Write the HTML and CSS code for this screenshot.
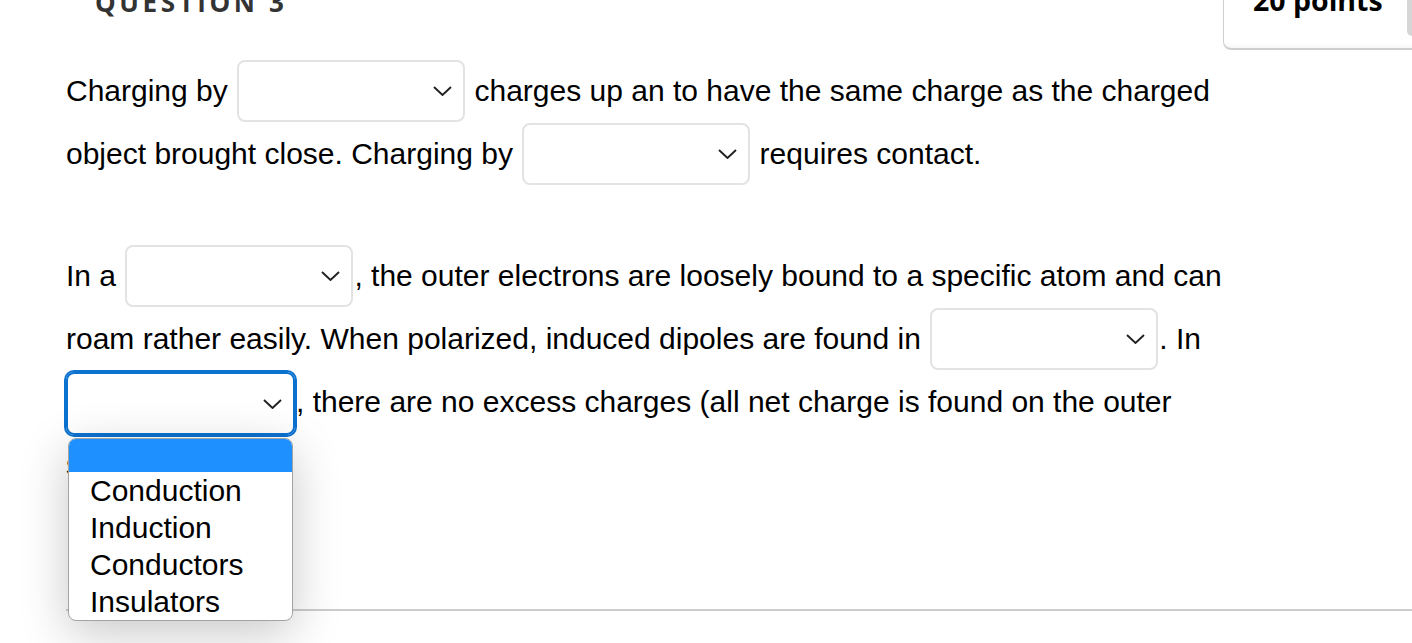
FILE: index.html
```html
<!DOCTYPE html>
<html lang="en">
<head>
<meta charset="utf-8">
<title>Question 3</title>
<link rel="stylesheet" href="styles.css">
</head>
<body>
<div class="page">
  <header class="qhead">
    <h2 class="qtitle">QUESTION 3</h2>
    <div class="points">
      <span class="ptext">20 points</span>
      <span class="pbar"></span>
    </div>
  </header>
  <div class="qbody">
    <p class="para">Charging by <span class="sel"><svg class="chev" viewBox="0 0 19 10" width="19" height="10"><polyline points="1,1 9.5,9 18,1"/></svg></span> charges up an to have the same charge as the charged object brought close. Charging by <span class="sel"><svg class="chev" viewBox="0 0 19 10" width="19" height="10"><polyline points="1,1 9.5,9 18,1"/></svg></span> requires contact.</p>
    <p class="para para2">In a <span class="sel"><svg class="chev" viewBox="0 0 19 10" width="19" height="10"><polyline points="1,1 9.5,9 18,1"/></svg></span>, the outer electrons are loosely bound to a specific atom and can roam rather easily. When polarized, induced dipoles are found in <span class="sel"><svg class="chev" viewBox="0 0 19 10" width="19" height="10"><polyline points="1,1 9.5,9 18,1"/></svg></span>. In <span class="sel sel-first focused"><svg class="chev" viewBox="0 0 19 10" width="19" height="10"><polyline points="1,1 9.5,9 18,1"/></svg><span class="menu"><span class="opt opt-blank"></span><span class="opt">Conduction</span><span class="opt">Induction</span><span class="opt">Conductors</span><span class="opt">Insulators</span></span></span>, there are no excess charges (all net charge is found on the outer surface).</p>
  </div>
  <div class="sep"></div>
</div>
</body>
</html>
```
FILE: styles.css
```css
html, body {
  margin: 0;
  padding: 0;
  overflow: hidden;
  background: #fff;
}

.page {
  width: 1412px;
  height: 643px;
  overflow: hidden;
  font-family: "Liberation Sans", Arial, sans-serif;
  color: #000;
}

.qhead {
  display: flex;
  align-items: flex-start;
  height: 50px;
}

.qtitle {
  margin: -11px 0 0 95px;
  font-family: "Open Sans", sans-serif;
  font-weight: 700;
  font-size: 26px;
  line-height: 26px;
  letter-spacing: 3.6px;
  color: #333;
}

.points {
  margin-left: auto;
  width: 189px;
  height: 50px;
  box-sizing: border-box;
  border-left: 1px solid #cfcfcf;
  border-bottom: 2px solid #cfcfcf;
  border-bottom-left-radius: 8px;
  display: flex;
  align-items: flex-start;
  box-shadow: inset 0 -6px 6px -6px rgba(0, 0, 0, 0.08);
}

.ptext {
  margin: -15px 0 0 29px;
  font-family: "Open Sans", sans-serif;
  font-weight: 700;
  font-size: 28.5px;
  line-height: 30px;
  color: #000;
  white-space: nowrap;
}

.pbar {
  margin-left: 24px;
  width: 20px;
  height: 36px;
  background: #d6d6d6;
  border-bottom-left-radius: 6px;
}

.qbody {
  padding: 9px 0 0 66px;
  width: 1194px;
}

.para {
  margin: 0;
  font-size: 30px;
  line-height: 63px;
}

.para2 {
  margin-top: 59px;
}

.sel {
  display: inline-flex;
  align-items: center;
  justify-content: flex-end;
  position: relative;
  box-sizing: border-box;
  width: 228px;
  height: 62px;
  margin: 0 1px;
  padding-right: 11px;
  border: 2px solid #e3e3e3;
  border-radius: 8px;
  background: #fff;
  vertical-align: bottom;
}

.sel-first {
  margin-left: 0;
}

.focused {
  width: 229px;
  height: 63px;
  margin-bottom: -2px;
  border-color: #0c72d0;
  outline: 2px solid #0c72d0;
  outline-offset: 0;
}

.chev {
  display: block;
  fill: none;
  stroke: #222;
  stroke-width: 1.9;
}

.menu {
  position: absolute;
  top: 64px;
  left: 0;
  width: 225px;
  box-sizing: border-box;
  border: 1px solid #a3a3a3;
  border-radius: 8px;
  background: #fff;
  overflow: hidden;
  display: flex;
  flex-direction: column;
  box-shadow: 0 12px 48px rgba(0, 0, 0, 0.22);
  z-index: 5;
}

.opt {
  display: block;
  height: 37px;
  line-height: 37px;
  padding-left: 21px;
  font-size: 30px;
  color: #000;
  white-space: nowrap;
}

.opt-blank {
  height: 33px;
  background: #1e90ff;
}

.sep {
  margin: 113px 0 0 66px;
  height: 2px;
  background: #cccccc;
}
```
